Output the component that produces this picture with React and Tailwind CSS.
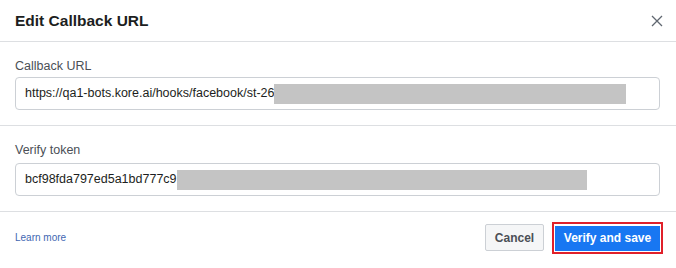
export default function App() {
  return (
    <div className="w-[676px] h-[268px] bg-white font-['Liberation_Sans',Arial,sans-serif] text-[#1c1e21]">
      <header className="flex h-[42px] items-center justify-between border-b border-[#dddfe2] pl-[15px] pr-[9px]">
        <h1 className="text-[15.5px] font-bold text-[#1c1e21]">Edit Callback URL</h1>
        <button className="flex h-[20px] w-[20px] items-center justify-center text-[#606770]">
          <svg width="12" height="12" viewBox="0 0 12 12" fill="none" stroke="currentColor" strokeWidth="1.3">
            <path d="M1 1l10 10M11 1L1 11" />
          </svg>
        </button>
      </header>

      <section className="border-b border-[#dddfe2] pl-[15px] pr-[16px] pt-[16px] pb-[15px]">
        <label className="block text-[12.5px] leading-[16px] text-[#4b4f56]">Callback URL</label>
        <div className="mt-[3px] flex h-[33px] items-center rounded-[4px] border border-[#ccd0d5] pl-[9px]">
          <span className="text-[12.5px] text-[#1c1e21]">https://qa1-bots.kore.ai/hooks/facebook/st-26</span>
          <span className="h-[20px] w-[352px] bg-[#c4c4c4]" />
        </div>
      </section>

      <section className="border-b border-[#dddfe2] pl-[15px] pr-[16px] pt-[16px] pb-[15px]">
        <label className="block text-[12.5px] leading-[16px] text-[#4b4f56]">Verify token</label>
        <div className="mt-[5px] flex h-[33px] items-center rounded-[4px] border border-[#ccd0d5] pl-[9px]">
          <span className="text-[12.5px] text-[#1c1e21]">bcf98fda797ed5a1bd777c9</span>
          <span className="h-[20px] w-[410px] bg-[#c4c4c4]" />
        </div>
      </section>

      <footer className="flex items-center justify-between pl-[15px] pr-[13px] pt-[10px]">
        <a className="text-[10px] text-[#4267b2]">Learn more</a>
        <div className="flex items-center gap-[8px]">
          <button className="h-[27px] w-[59px] rounded-[2px] border border-[#ccd0d5] bg-[#f5f6f7] text-[12px] font-bold text-[#4b4f56]">
            Cancel
          </button>
          <div className="border-2 border-[#e0202a] p-px">
            <button className="h-[25px] w-[105px] bg-[#1877f2] text-[12px] font-bold text-white">
              Verify and save
            </button>
          </div>
        </div>
      </footer>
    </div>
  )
}
